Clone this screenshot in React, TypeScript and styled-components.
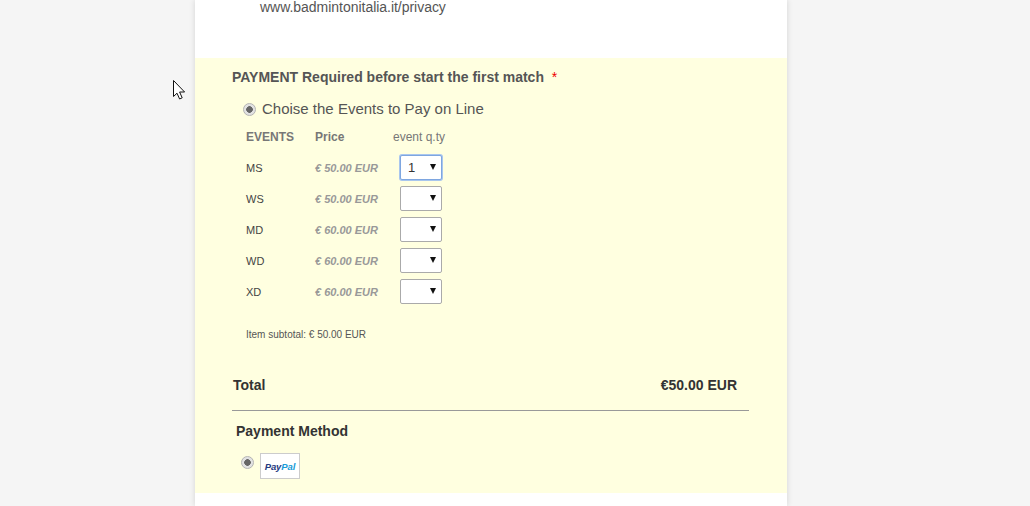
import React from "react";
import styled, { createGlobalStyle } from "styled-components";

const Global = createGlobalStyle`
  html, body { margin: 0; padding: 0; height: 506px; overflow: hidden; background: #f5f5f5; }
  body { font-family: "Liberation Sans", Arial, sans-serif; }
`;
const Page = styled.div`position: relative; width: 1030px; height: 506px; overflow: hidden;`;
const Card = styled.main`
  width: 592px; height: 506px; margin-left: 195px; background: #fff;
  box-shadow: 0 0 6px rgba(0,0,0,.14); display: flex; flex-direction: column;
`;
const PrivacyLine = styled.div`
  height: 58px; box-sizing: border-box; padding-left: 65px; margin-top: -2px;
  font-size: 14px; line-height: 18px; color: #555; letter-spacing: -.03px; flex: none;
`;
const Section = styled.section`
  height: 435px; box-sizing: border-box; background: #ffffe0; padding: 11px 38px 0 37px; flex: none; margin-top: 2px;
`;
const Heading = styled.div`
  font-size: 14px; font-weight: 700; line-height: 16px; color: #555;
  span { color: #e00; font-weight: 400; margin-left: 4px; }
`;
const ChoiceRow = styled.label`
  display: flex; align-items: center; gap: 6px; margin: 15px 0 0 11px;
  font-size: 15px; line-height: 18px; color: #555;
`;
const Radio = styled.span`
  width: 13px; height: 13px; box-sizing: border-box; border-radius: 50%; flex: none;
  border: 1px solid #b4b4b4; background: radial-gradient(circle, #666 0 3px, #e2e2e2 3.6px);
`;
const EventsGrid = styled.div`
  display: grid; grid-template-columns: 69px 78px 60px; margin: 11px 0 0 14px;
`;
const HeadCell = styled.div<{ $bold?: boolean }>`
  font-size: 12px; line-height: 16px; color: #777; font-weight: ${p => (p.$bold ? 700 : 400)};
  height: 23px;
`;
const Cell = styled.div`
  height: 31px; display: flex; align-items: center; font-size: 11px; color: #444;
`;
const Price = styled(Cell)`font-style: italic; font-weight: 700; color: #999;`;
const SelectCell = styled(Cell)`padding-left: 7px;`;
const FakeSelect = styled.div<{ $focus?: boolean }>`
  width: 42px; height: 25px; box-sizing: border-box; background: #fff; position: relative;
  display: flex; align-items: center; padding-left: 7px; font-size: 13px; color: #333;
  border: 1px solid ${p => (p.$focus ? "#7ea6e0" : "#aaa")}; border-radius: 2px;
  box-shadow: ${p => (p.$focus ? "0 0 0 1px #a9c6ee" : "none")};
  &::after {
    content: ""; position: absolute; right: 5px; top: 8px;
    border: 3.5px solid transparent; border-top: 6px solid #111; border-bottom: 0;
  }
`;
const Subtotal = styled.div`
  font-size: 10px; line-height: 11px; color: #555; margin: 22px 0 0 14px;
`;
const TotalRow = styled.div`
  display: flex; justify-content: space-between; margin: 37px 12px 0 1px;
  font-size: 14px; line-height: 16px; font-weight: 700; color: #333;
`;
const Divider = styled.hr`
  border: 0; border-top: 1px solid #999; margin: 17px 0 0 0; width: 517px;
`;
const MethodTitle = styled.div`
  font-size: 14px; line-height: 16px; font-weight: 700; color: #333; margin: 12px 0 0 4px;
`;
const MethodRow = styled.div`display: flex; align-items: flex-start; gap: 6px; margin: 14px 0 0 9px;`;
const MethodRadio = styled(Radio)`margin-top: 3px;`;
const PayPalBadge = styled.div`
  width: 40px; height: 26px; box-sizing: border-box; border: 1px solid #ccc; background: #fff;
  display: flex; align-items: center; justify-content: center;
  font-size: 9.5px; font-weight: 700; font-style: italic; color: #253b80; letter-spacing: -.1px;
  span { color: #179bd7; }
`;
const Cursor = styled.svg`position: absolute; left: 172px; top: 79px;`;

const rows = [
  ["MS", "€ 50.00 EUR", "1"],
  ["WS", "€ 50.00 EUR", ""],
  ["MD", "€ 60.00 EUR", ""],
  ["WD", "€ 60.00 EUR", ""],
  ["XD", "€ 60.00 EUR", ""],
];

export default function App() {
  return (
    <Page>
      <Global />
      <Card>
        <PrivacyLine>www.badmintonitalia.it/privacy</PrivacyLine>
        <Section>
          <Heading>PAYMENT Required before start the first match <span>*</span></Heading>
          <ChoiceRow><Radio />Choise the Events to Pay on Line</ChoiceRow>
          <EventsGrid>
            <HeadCell $bold>EVENTS</HeadCell>
            <HeadCell $bold>Price</HeadCell>
            <HeadCell>event q.ty</HeadCell>
            {rows.map(([n, p, v], i) => (
              <React.Fragment key={n}>
                <Cell>{n}</Cell>
                <Price>{p}</Price>
                <SelectCell><FakeSelect $focus={i === 0}>{v}</FakeSelect></SelectCell>
              </React.Fragment>
            ))}
          </EventsGrid>
          <Subtotal>Item subtotal: € 50.00 EUR</Subtotal>
          <TotalRow><span>Total</span><span>€50.00 EUR</span></TotalRow>
          <Divider />
          <MethodTitle>Payment Method</MethodTitle>
          <MethodRow>
            <MethodRadio />
            <PayPalBadge>Pay<span>Pal</span></PayPalBadge>
          </MethodRow>
        </Section>
      </Card>
      <Cursor width="16" height="22" viewBox="0 0 16 22">
        <path d="M1.5 1.5 V17.5 L5 14.2 L7.6 20 L10.2 18.8 L7.6 13 H12.6 Z" fill="#fff" stroke="#111" strokeWidth="1" />
      </Cursor>
    </Page>
  );
}
